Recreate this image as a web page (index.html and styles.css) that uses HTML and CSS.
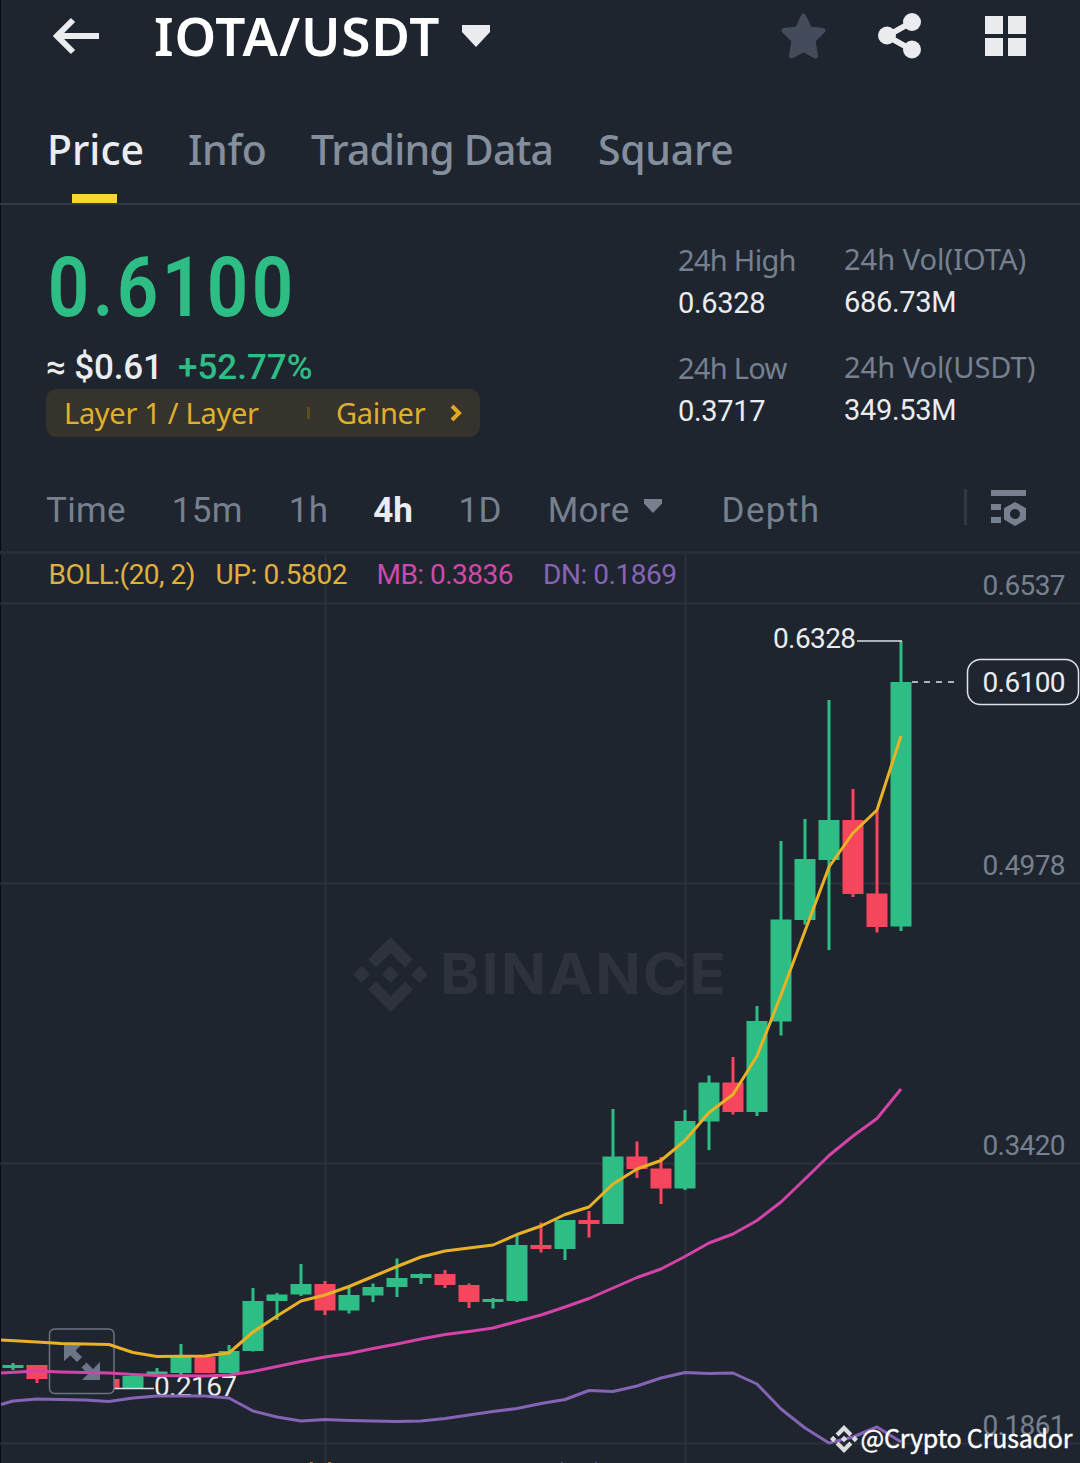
FILE: index.html
```html
<!DOCTYPE html>
<html lang="en">
<head>
    <meta charset="UTF-8">
    <title>IOTA/USDT</title>
    <link rel="stylesheet" href="styles.css">
</head>
<body>
    <div class="header">
        <svg class="back-icon" width="46" height="38" viewBox="0 0 46 38">
            <path d="M20 3L4 19l16 16M5 19h41" fill="none" stroke="#eaecef" stroke-width="6"/>
        </svg>
        <div class="pair">IOTA/USDT</div>
        <svg class="pair-caret" width="28" height="22" viewBox="0 0 28 22">
            <path d="M0 0h28v7L14 22 0 7z" fill="#eaecef"/>
        </svg>
        <div class="header-actions">
            <svg width="45" height="46" viewBox="0 0 45 46">
                <path d="M22.500 3l6 13 13.500 1.500-10 10 2.500 15.500-12-6.500-12 6.500 2.500-15.500-10-10L16.500 16z" fill="#434c5a" stroke="#434c5a" stroke-width="5" stroke-linejoin="round"/>
            </svg>
            <svg width="43" height="46" viewBox="0 0 43 46">
                <path d="M34 9L9 23l25 14" fill="none" stroke="#eaecef" stroke-width="6"/>
                <circle cx="34" cy="9" r="9" fill="#eaecef"/>
                <circle cx="9" cy="22.500" r="9" fill="#eaecef"/>
                <circle cx="34" cy="36.500" r="9" fill="#eaecef"/>
            </svg>
            <svg width="41" height="40" viewBox="0 0 41 40">
                <path d="M0 0h18v18H0zM23 0h18v18H23zM0 22h18v18H0zM23 22h18v18H23z" fill="#eaecef"/>
            </svg>
        </div>
    </div>

    <div class="tabs">
        <div class="tab tab-price active">Price</div>
        <div class="tab tab-info">Info</div>
        <div class="tab tab-data">Trading Data</div>
        <div class="tab tab-square">Square</div>
    </div>

    <div class="summary">
        <div class="price-block">
            <div class="last-price">0.6100</div>
            <div class="price-row">
                <span class="fiat">≈ $0.61</span>
                <span class="change">+52.77%</span>
            </div>
            <div class="tags">
                <span class="tag-layer">Layer 1 / Layer</span>
                <span class="tag-divider"></span>
                <span class="tag-gainer">Gainer</span>
                <svg width="12" height="18" viewBox="0 0 12 18">
                    <path d="M2 2l7 7-7 7" fill="none" stroke="#e0a81e" stroke-width="4"/>
                </svg>
            </div>
        </div>
        <div class="stats">
            <div class="stats-col">
                <div class="stat-label">24h High</div>
                <div class="stat-value">0.6328</div>
                <div class="stat-label">24h Low</div>
                <div class="stat-value">0.3717</div>
            </div>
            <div class="stats-col volume">
                <div class="stat-label">24h Vol(IOTA)</div>
                <div class="stat-value">686.73M</div>
                <div class="stat-label">24h Vol(USDT)</div>
                <div class="stat-value">349.53M</div>
            </div>
        </div>
    </div>

    <div class="intervals">
        <span class="interval">Time</span>
        <span class="interval">15m</span>
        <span class="interval">1h</span>
        <span class="interval active">4h</span>
        <span class="interval">1D</span>
        <span class="interval more">More
            <svg width="18" height="14" viewBox="0 0 18 14"><path d="M0 0h18v4.500L9 14 0 4.500z" fill="#76808f"/></svg>
        </span>
        <span class="interval depth">Depth</span>
        <span class="interval-divider"></span>
        <svg class="settings-icon" width="36" height="37" viewBox="0 0 36 37">
            <path d="M0 0h35v6H0zM0 14h10v6H0zM0 27h10v6H0z" fill="#76808f"/>
            <path d="M24 12l11 6.200v11.400L24 36l-11-6.400V18.200zM24 19a5 5 0 1 0 0 10 5 5 0 0 0 0-10z" fill="#76808f" fill-rule="evenodd"/>
        </svg>
    </div>

    <svg class="chart" width="1080" height="909" viewBox="0 554 1080 909">
        <defs>
            <symbol id="logo" viewBox="0 0 75 75">
                <path d="M37.500 0L60 22.500l-8 8L37.500 16 23 30.500l-8-8zM37.500 75L60 52.500l-8-8L37.500 59 23 44.500l-8 8zM8.500 29l8.500 8.500-8.500 8.500L0 37.500zM37.500 29l8.500 8.500-8.500 8.500-8.500-8.500zM66.500 29l8.500 8.500-8.500 8.500-8.500-8.500z"/>
            </symbol>
        </defs>

        <!-- watermark -->
        <g class="watermark">
            <use href="#logo" x="353" y="937" width="75" height="75"/>
            <text x="440" y="994" textLength="288" lengthAdjust="spacingAndGlyphs">BINANCE</text>
        </g>

        <path class="grid" d="M0 603.500H1080M0 883.500H1080M0 1163.500H1080M0 1443.500H1080M325.500 554V1463M685.500 554V1463"/>

        <g class="legend">
            <text class="up" x="48.500" y="584" textLength="147">BOLL:(20, 2)</text>
            <text class="up" x="215.500" y="584" textLength="132">UP: 0.5802</text>
            <text class="mb" x="376.500" y="584" textLength="137">MB: 0.3836</text>
            <text class="dn" x="543" y="584" textLength="134">DN: 0.1869</text>
        </g>

        <g class="axis">
            <text x="982.500" y="595" textLength="83">0.6537</text>
            <text x="982.500" y="875" textLength="83">0.4978</text>
            <text x="982.500" y="1155" textLength="83">0.3420</text>
            <text x="982.500" y="1435" textLength="83">0.1861</text>
        </g>

        <g id="candles"></g>

        <!-- high / low markers -->
        <g class="marker">
            <text x="773" y="648" textLength="83">0.6328</text>
            <path d="M857 641H902"/>
            <text x="154" y="1396" textLength="83">0.2167</text>
            <path d="M114 1388.500H154"/>
            <path d="M912 682H954" stroke-dasharray="6 6"/>
            <rect x="967.500" y="659.500" width="111" height="45" rx="13"/>
            <text x="982.500" y="692" textLength="83">0.6100</text>
        </g>

        <g class="expand">
            <rect x="49.500" y="1329" width="64.500" height="64.500" rx="5"/>
            <path d="M64 1345h17l-5.500 5.500 6.500 6.500-5 5-6.500-6.500L64 1361zM100 1380H82l6-6-6.500-6.500 5-5 6.500 6.500 7-7z"/>
        </g>

        <g id="bands"></g>

        <!-- tops of the volume legend -->
        <path d="M310 1462.500h3M328 1462.500h3" stroke="#a5822a"/>
        <path d="M561 1462.500h2M595 1462.500h2" stroke="#5f4d80"/>

        <g class="author">
            <use href="#logo" x="830" y="1425" width="28" height="28"/>
            <text x="860.500" y="1448" textLength="212">@Crypto Crusador</text>
        </g>
    </svg>
    <script src="chart.js"></script>
</body>
</html>
```

FILE: styles.css
```css
* {
    box-sizing: border-box;
}

body {
    margin: 0;
    width: 1080px;
    height: 1463px;
    overflow: hidden;
    background: #1f252f;
    color: #eaecef;
    font-family: "Noto Sans", sans-serif;
    box-shadow: inset 1px 0 0 #07090c;
}

svg {
    display: block;
    flex-shrink: 0;
}

/* Header */
.header {
    display: flex;
    align-items: center;
    height: 71px;
    padding: 0 54px 0 53px;
}

.pair {
    width: 308px;
    margin-left: 55px;
    font-size: 53px;
    line-height: 73px;
    font-weight: 600;
    letter-spacing: 0.8px;
    color: #fff;
    white-space: nowrap;
}

.header-actions {
    display: flex;
    align-items: center;
    margin-left: auto;
}

.header-actions svg + svg {
    margin-left: 52px;
}

.header-actions svg:last-child {
    margin-left: 64px;
}

/* Tabs */
.tabs {
    display: flex;
    height: 134px;
    padding: 22px 0 0 47px;
    border-bottom: 2px solid #323843;
}

.tab {
    position: relative;
    line-height: 112px;
    font-size: 41px;
    font-weight: 500;
    color: #848e9c;
    white-space: nowrap;
}

.tab-price {
    width: 141px;
}

.tab-info {
    width: 123px;
    letter-spacing: -0.4px;
}

.tab-data {
    width: 287px;
    letter-spacing: -0.8px;
}

.tab-square {
    letter-spacing: -0.3px;
}

.tab.active {
    color: #eaecef;
}

.tab.active::after {
    content: "";
    position: absolute;
    left: 24.5px;
    bottom: 0;
    width: 45px;
    height: 9px;
    background: #fcd535;
}

/* Price summary */
.summary {
    display: flex;
    height: 265px;
    padding-left: 46px;
}

.price-block {
    width: 632px;
    padding-top: 41px;
}

.last-price {
    padding-left: 2px;
    font-family: Roboto, sans-serif;
    font-size: 84px;
    line-height: 84px;
    font-weight: 600;
    letter-spacing: 4px;
    color: #2ebd85;
    transform: scaleX(0.865);
    transform-origin: left;
}

.price-row {
    display: flex;
    margin-top: 18px;
    font-family: Roboto, sans-serif;
    font-size: 35px;
    line-height: 40px;
    font-weight: 500;
}

.fiat {
    width: 132px;
    letter-spacing: -0.2px;
}

.change {
    color: #2ebd85;
}

.tags {
    display: flex;
    align-items: center;
    width: 434px;
    height: 48px;
    margin-top: 1px;
    padding-left: 18px;
    border-radius: 11px;
    background: #35332c;
    color: #e0b02c;
    font-size: 29px;
    line-height: 36px;
}

.tag-layer {
    width: 243px;
    letter-spacing: -0.3px;
}

.tag-divider {
    width: 3px;
    height: 12px;
    margin-right: 26px;
    background: #5c4c25;
}

.tag-gainer {
    width: 114px;
    letter-spacing: -0.3px;
}

.stats {
    display: flex;
    padding-top: 34px;
    font-size: 29px;
    line-height: 42px;
    white-space: nowrap;
}

.stats-col {
    width: 166px;
}

.stats-col:first-child .stat-label {
    letter-spacing: -0.7px;
}

.stats-col.volume {
    margin-top: -1px;
}

.stat-label {
    color: #76808f;
}

.stat-value {
    height: 42px;
    font-family: Roboto, sans-serif;
    line-height: 44px;
    letter-spacing: -0.3px;
}

.stat-value + .stat-label {
    margin-top: 24px;
}

/* Chart intervals */
.intervals {
    display: flex;
    align-items: center;
    height: 84px;
    padding-left: 46px;
    border-bottom: 3px solid #272d38;
    font-family: Roboto, sans-serif;
    font-size: 35px;
    letter-spacing: 0.3px;
    color: #76808f;
}

.interval {
    margin-right: 46px;
}

.interval.active {
    margin-left: -1px;
    color: #eaecef;
    font-weight: 700;
    letter-spacing: -0.3px;
}

.interval.more {
    display: flex;
    gap: 14px;
    margin-right: 60px;
}

.interval.depth {
    letter-spacing: 1.4px;
}

.more svg {
    margin-top: 9px;
}

.interval-divider {
    width: 3px;
    height: 36px;
    margin: 0 0 8px auto;
    background: #323843;
}

.settings-icon {
    margin: 0 53px 5px 24px;
}

/* Chart */
.chart text {
    font-family: Roboto, sans-serif;
    font-size: 28px;
}

.grid {
    stroke: #2c323d;
    stroke-width: 2;
}

.watermark {
    fill: #2d323d;
}

.chart .watermark text {
    font-family: Inter, sans-serif;
    font-size: 57px;
    font-weight: 700;
    letter-spacing: 2px;
}

.legend .up {
    fill: #e0b040;
}

.legend .mb {
    fill: #cf49a9;
}

.legend .dn {
    fill: #8764b5;
}

.axis {
    fill: #76808f;
}

.marker path,
.marker rect {
    fill: none;
    stroke: #dfe1e6;
    stroke-width: 1.5;
}

.marker text {
    fill: #eaecef;
}

.rise {
    stroke: #2ebd85;
}

.fall {
    stroke: #f6465d;
}

.candle-body {
    stroke-width: 21;
}

.candle-wick {
    stroke-width: 3;
}

.expand rect {
    fill: #1f252f;
    stroke: #6c7380;
    stroke-width: 1.5;
}

.expand path {
    fill: #6c7687;
}

.band {
    fill: none;
    stroke-width: 3;
    stroke-linejoin: round;
}

.band.up {
    stroke: #e8b224;
}

.band.mb {
    stroke: #d343a8;
}

.band.dn {
    stroke: #8563b5;
}

.author {
    fill: #dcdcdc;
}

.chart .author text {
    font-family: "Noto Sans CJK SC", sans-serif;
    font-size: 25px;
    font-weight: 400;
    fill: #fff;
    stroke: #fff;
    stroke-width: 0.4;
}
```

FILE: chart.js
```js
const svgNS = 'http://www.w3.org/2000/svg';

// x, high, body top, body bottom, low, direction
const candles = [
    [13, 1363, 1365, 1368, 1370, 1],
    [37, 1365, 1365, 1379, 1383, 0],
    [109, 1379, 1379, 1388, 1388, 0],
    [133, 1376, 1376, 1388, 1388, 1],
    [157, 1368, 1371.5, 1374, 1374, 1],
    [181, 1344, 1357, 1373, 1375, 1],
    [205, 1357, 1357, 1373, 1373, 0],
    [229, 1345, 1351, 1373, 1373, 1],
    [253, 1288, 1301, 1351, 1351.5, 1],
    [277, 1293, 1294.5, 1301, 1320, 1],
    [301, 1264, 1284, 1294.5, 1296, 1],
    [325, 1281, 1284, 1310.5, 1315, 0],
    [349, 1287, 1295, 1310.5, 1313.5, 1],
    [373, 1283.5, 1287, 1295.5, 1302, 1],
    [397, 1258.5, 1278, 1287, 1297, 1],
    [421, 1273.5, 1274, 1278, 1284, 1],
    [445, 1270, 1274, 1285, 1288, 0],
    [469, 1283.5, 1285, 1302, 1308, 0],
    [493, 1298, 1299, 1302, 1308.5, 1],
    [517, 1235, 1245, 1301, 1302, 1],
    [541, 1222.5, 1245, 1249, 1252.5, 0],
    [565, 1220, 1220, 1249, 1260, 1],
    [589, 1211, 1220, 1224, 1237.5, 0],
    [613, 1109, 1156.5, 1224, 1224, 1],
    [637, 1141.5, 1156.5, 1169, 1178, 0],
    [661, 1157, 1168.5, 1188.5, 1204, 0],
    [685, 1110, 1121, 1188.5, 1190, 1],
    [709, 1075.5, 1082.5, 1121.5, 1150, 1],
    [733, 1057, 1082.5, 1112, 1114.5, 0],
    [757, 1006, 1021, 1112, 1116, 1],
    [781, 841, 919.5, 1021.5, 1035.5, 1],
    [805, 819, 859, 920, 924.5, 1],
    [829, 700, 820, 860, 950, 1],
    [853, 789, 820, 894, 897, 0],
    [877, 810, 893.5, 927, 932.5, 0],
    [901, 641, 682, 926.5, 931, 1]
];

const bands = {
    up: '1,1340 37,1342 61,1343.5 109,1344.5 133,1352.5 157,1356.5 205,1356 229,1353 253,1332 277,1316 301,1301 325,1295 349,1286.5 373,1276.5 397,1266.5 421,1257 445,1251 469,1248 493,1245 517,1234.5 541,1226 565,1214.5 589,1207 613,1184 637,1169 661,1160.5 685,1140.5 709,1112.5 733,1094.5 757,1056 781,995 805,931 829,867 853,833 877,810 901,736',
    mb: '1,1373 37,1371 61,1372 109,1373 133,1374.5 157,1375.5 205,1376 229,1375 253,1371.5 277,1366.5 301,1361.5 325,1357 349,1353.5 373,1348.5 397,1344 421,1339 445,1334.5 469,1331.5 493,1328 517,1321.5 541,1315 565,1307 589,1298.5 613,1288 637,1277.5 661,1269 685,1256.5 709,1243 733,1234 757,1220.5 781,1202 805,1179 829,1155.5 853,1136 877,1118.5 901,1089',
    dn: '1,1404.5 13,1401 37,1399 85,1400 109,1401.5 133,1398 157,1396 205,1396 229,1398 253,1411 277,1417 301,1421 325,1419.5 349,1420.5 397,1421.5 421,1421 445,1418.5 469,1415 493,1411.5 517,1408.5 541,1403.5 565,1399.5 589,1390.5 613,1391.5 637,1386 661,1378 685,1372.5 709,1373.5 733,1373 757,1384 781,1409 805,1428 829,1443 853,1437 877,1427 901,1442'
};

function add(parent, tag, className, attr, value) {
    const el = document.createElementNS(svgNS, tag);
    el.setAttribute('class', className);
    el.setAttribute(attr, value);
    parent.appendChild(el);
}

const candleGroup = document.getElementById('candles');
candles.forEach(([x, high, top, bottom, low, rising]) => {
    const dir = rising ? 'rise' : 'fall';
    add(candleGroup, 'path', 'candle-wick ' + dir, 'd', `M${x} ${high}V${low}`);
    add(candleGroup, 'path', 'candle-body ' + dir, 'd', `M${x} ${top}V${bottom}`);
});

const bandGroup = document.getElementById('bands');
Object.keys(bands).forEach(name => {
    add(bandGroup, 'polyline', 'band ' + name, 'points', bands[name]);
});
```
